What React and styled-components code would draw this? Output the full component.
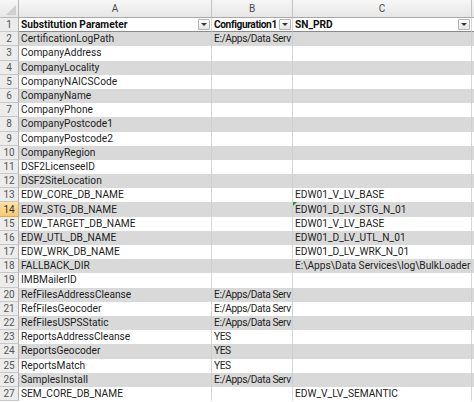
import React from "react";
import styled, { createGlobalStyle, css } from "styled-components";

const GlobalStyle = createGlobalStyle`
    html, body {
        margin: 0;
        padding: 0;
        background: #ffffff;
        overflow: hidden;
    }
    #root {
        width: 474px;
        height: 402px;
    }
`;

const rows = [
    ["Substitution Parameter", "Configuration1", "SN_PRD"],
    ["CertificationLogPath", "E:/Apps/Data Serv", ""],
    ["CompanyAddress", "", ""],
    ["CompanyLocality", "", ""],
    ["CompanyNAICSCode", "", ""],
    ["CompanyName", "", ""],
    ["CompanyPhone", "", ""],
    ["CompanyPostcode1", "", ""],
    ["CompanyPostcode2", "", ""],
    ["CompanyRegion", "", ""],
    ["DSF2LicenseeID", "", ""],
    ["DSF2SiteLocation", "", ""],
    ["EDW_CORE_DB_NAME", "", "EDW01_V_LV_BASE"],
    ["EDW_STG_DB_NAME", "", "EDW01_D_LV_STG_N_01"],
    ["EDW_TARGET_DB_NAME", "", "EDW01_V_LV_BASE"],
    ["EDW_UTL_DB_NAME", "", "EDW01_D_LV_UTL_N_01"],
    ["EDW_WRK_DB_NAME", "", "EDW01_D_LV_WRK_N_01"],
    ["FALLBACK_DIR", "", "E:\\Apps\\Data Services\\log\\BulkLoader"],
    ["IMBMailerID", "", ""],
    ["RefFilesAddressCleanse", "E:/Apps/Data Serv", ""],
    ["RefFilesGeocoder", "E:/Apps/Data Serv", ""],
    ["RefFilesUSPSStatic", "E:/Apps/Data Serv", ""],
    ["ReportsAddressCleanse", "YES", ""],
    ["ReportsGeocoder", "YES", ""],
    ["ReportsMatch", "YES", ""],
    ["SamplesInstall", "E:/Apps/Data Serv", ""],
    ["SEM_CORE_DB_NAME", "", "EDW_V_LV_SEMANTIC"],
];

const ACTIVE_ROW = 14;

export default function App() {
    return (
        <>
            <GlobalStyle />
            <Sheet>
                <Corner>
                    <CornerMark />
                </Corner>
                <ColHead>A</ColHead>
                <ColHead>B</ColHead>
                <ColHead>C</ColHead>
                <ColHead $last />
                {rows.map((r, i) => {
                    const n = i + 1;
                    const header = n === 1;
                    const band = n % 2 === 0;
                    return (
                        <React.Fragment key={n}>
                            <RowHead $active={n === ACTIVE_ROW}>{n}</RowHead>
                            {r.map((v, j) => (
                                <Cell key={j} $band={band} $header={header}>
                                    {n === ACTIVE_ROW && j === 2 && <ErrorMark />}
                                    <CellText $tight={j === 1}>{v}</CellText>
                                    {header && <FilterButton><Arrow /></FilterButton>}
                                </Cell>
                            ))}
                            <Cell $band={band} $header={header} $last />
                        </React.Fragment>
                    );
                })}
            </Sheet>
        </>
    );
}

const Sheet = styled.div`
    display: grid;
    grid-template-columns: 19px 193px 81px 179px 1fr;
    grid-template-rows: 18px repeat(28, 14.2px);
    width: 474px;
    height: 402px;
    overflow: hidden;
    font-family: Roboto, "Liberation Sans", sans-serif;
    font-size: 10.2px;
    color: #1e1e1e;
`;

const headBg = css`
    background: linear-gradient(#f7f7f7, #e6e6e6);
    color: #4a4a4a;
`;

const Corner = styled.div`
    ${headBg}
    position: relative;
    border-right: 1px solid #b8b8b8;
    border-bottom: 1px solid #b8b8b8;
    box-sizing: border-box;
`;

const CornerMark = styled.div`
    position: absolute;
    right: 2px;
    bottom: 2px;
    width: 0;
    height: 0;
    border-left: 10px solid transparent;
    border-bottom: 10px solid #d0d0d0;
`;

const ColHead = styled.div`
    ${headBg}
    display: flex;
    align-items: center;
    justify-content: center;
    box-sizing: border-box;
    border-right: 1px solid ${p => (p.$last ? "transparent" : "#c2c2c2")};
    border-bottom: 1px solid #a8a8a8;
    font-size: 10px;
`;

const RowHead = styled.div`
    display: flex;
    align-items: center;
    justify-content: center;
    box-sizing: border-box;
    border-right: 1px solid #b0b0b0;
    border-bottom: 1px solid #c8c8c8;
    font-size: 10px;
    background: #ececec;
    color: #555;
    ${p => p.$active && css`
        background: linear-gradient(#fde2a6, #f7c874);
        color: #333;
        border-bottom-color: #e2a84a;
    `}
`;

const Cell = styled.div`
    position: relative;
    display: flex;
    align-items: center;
    box-sizing: border-box;
    padding-left: 2px;
    overflow: hidden;
    white-space: nowrap;
    background: ${p => (p.$band ? "#d9d9d9" : "#ffffff")};
    border-right: 1px solid ${p => (p.$last ? "transparent" : p.$band ? "#cfcfcf" : "#d6d6d6")};
    ${p => p.$header && css`
        font-weight: bold;
        color: #111;
        border-bottom: 1px solid #8a8a8a;
        padding-right: 1px;
    `}
`;

const CellText = styled.span`
    flex: 1;
    overflow: hidden;
    line-height: 14px;
    letter-spacing: ${p => (p.$tight ? "-0.4px" : "0")};
`;

const FilterButton = styled.span`
    flex: none;
    display: flex;
    align-items: center;
    justify-content: center;
    width: 12px;
    height: 11px;
    box-sizing: border-box;
    border: 1px solid #b4b4b4;
    border-radius: 1px;
    background: linear-gradient(#fdfdfd, #e4e4e4);
`;

const Arrow = styled.span`
    width: 0;
    height: 0;
    border-left: 3px solid transparent;
    border-right: 3px solid transparent;
    border-top: 3px solid #333;
`;

const ErrorMark = styled.span`
    position: absolute;
    left: 0;
    top: 0;
    width: 0;
    height: 0;
    border-top: 4px solid #1e9a34;
    border-right: 4px solid transparent;
`;
